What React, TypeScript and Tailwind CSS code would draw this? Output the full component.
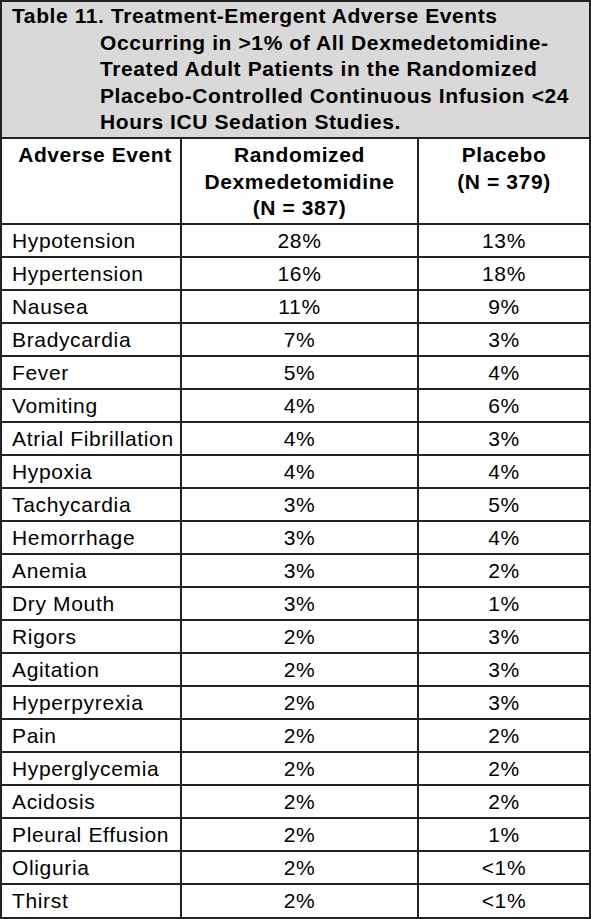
import React from "react";

const rows: [string, string, string][] = [
  ["Hypotension", "28%", "13%"],
  ["Hypertension", "16%", "18%"],
  ["Nausea", "11%", "9%"],
  ["Bradycardia", "7%", "3%"],
  ["Fever", "5%", "4%"],
  ["Vomiting", "4%", "6%"],
  ["Atrial Fibrillation", "4%", "3%"],
  ["Hypoxia", "4%", "4%"],
  ["Tachycardia", "3%", "5%"],
  ["Hemorrhage", "3%", "4%"],
  ["Anemia", "3%", "2%"],
  ["Dry Mouth", "3%", "1%"],
  ["Rigors", "2%", "3%"],
  ["Agitation", "2%", "3%"],
  ["Hyperpyrexia", "2%", "3%"],
  ["Pain", "2%", "2%"],
  ["Hyperglycemia", "2%", "2%"],
  ["Acidosis", "2%", "2%"],
  ["Pleural Effusion", "2%", "1%"],
  ["Oliguria", "2%", "<1%"],
  ["Thirst", "2%", "<1%"],
];

export default function App() {
  return (
    <div className="w-[591px] h-[919px] bg-white font-['Liberation_Sans',Arial,sans-serif] text-black">
      <div className="border-2 border-[#222] h-[919px] flex flex-col">
        {/* title, hanging indent */}
        <div className="bg-[#d9d9d9] h-[136px] pt-[1px] pl-[98px] pr-1 text-[21px] font-bold leading-[26.5px] tracking-[0.6px] indent-[-88px] whitespace-nowrap">
          Table 11. Treatment-Emergent Adverse Events
          <br />
          Occurring in &gt;1% of All Dexmedetomidine-
          <br />
          Treated Adult Patients in the Randomized
          <br />
          Placebo-Controlled Continuous Infusion &lt;24
          <br />
          Hours ICU Sedation Studies.
        </div>
        <table className="w-full border-collapse table-fixed">
          <colgroup>
            <col className="w-[179px]" />
            <col className="w-[237px]" />
            <col />
          </colgroup>
          <thead>
            <tr className="h-[86px] text-[21px] font-bold leading-[26.5px] tracking-[0.6px] align-top">
              <th className="border-t-2 border-r-2 border-[#222] pt-[3px] pl-[8px] text-center whitespace-nowrap">Adverse Event</th>
              <th className="border-t-2 border-r-2 border-[#222] pt-[3px] text-center">
                Randomized
                <br />
                Dexmedetomidine
                <br />
                (N = 387)
              </th>
              <th className="border-t-2 border-[#222] pt-[3px] text-center">
                Placebo
                <br />
                (N = 379)
              </th>
            </tr>
          </thead>
          <tbody className="text-[21px] leading-[24px] tracking-[0.65px]">
            {rows.map(([name, dex, pla]) => (
              <tr key={name} className="h-[33px]">
                <td className="border-t-2 border-r-2 border-[#222] pl-[10px] whitespace-nowrap">{name}</td>
                <td className="border-t-2 border-r-2 border-[#222] text-center">{dex}</td>
                <td className="border-t-2 border-[#222] text-center">{pla}</td>
              </tr>
            ))}
          </tbody>
        </table>
      </div>
    </div>
  );
}
